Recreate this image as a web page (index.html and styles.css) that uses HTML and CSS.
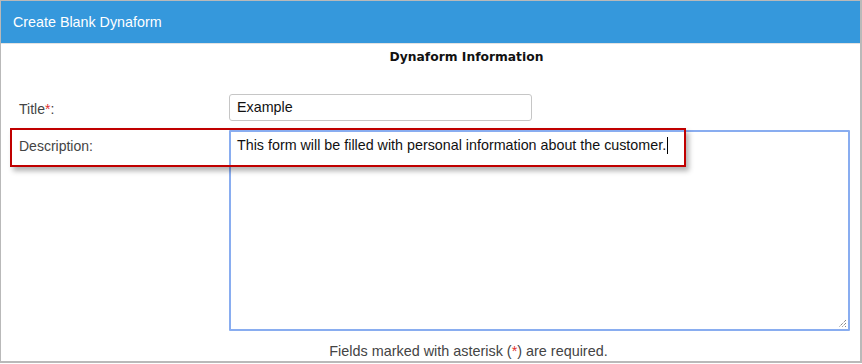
FILE: index.html
```html
<!DOCTYPE html>
<html lang="en">
<head>
  <meta charset="UTF-8" />
  <title>Create Blank Dynaform</title>
  <link rel="stylesheet" href="styles.css">
</head>
<body>

  <div class="panel">
    <!-- ===== Header ===== -->
    <div class="panel-header">Create Blank Dynaform</div>

    <div class="section-title">Dynaform Information</div>

    <!-- ===== Form ===== -->
    <div class="form-grid">
      <label class="field-label">Title<span class="req">*</span>:</label>
      <div class="text-input">Example</div>

      <label class="field-label desc-label">Description:</label>
      <div class="text-area">This form will be filled with personal information about the customer.<span class="caret"></span>
        <svg class="grip" width="9" height="9" viewBox="0 0 9 9">
          <path d="M8 1 L1 8 M8 4 L4 8 M8 7 L7 8" stroke="#555" stroke-width="1" stroke-dasharray="1 1" fill="none"/>
        </svg>
      </div>
    </div>

    <p class="note">Fields marked with asterisk (<span class="req">*</span>) are required.</p>

    <!-- highlight callout -->
    <div class="highlight"></div>
  </div>

</body>
</html>
```

FILE: styles.css
```css
body {
  margin: 0;
  font-family: "Liberation Sans", Arial, sans-serif;
  background: #fff;
  color: #333;
}

/* ===== Panel ===== */
.panel {
  position: relative;
  width: 859px;
  height: 360px;
  border: 1px solid #b9b9b9;
  border-right-width: 2px;
  border-bottom-width: 2px;
}
.panel-header {
  height: 42px;
  line-height: 42px;
  padding-left: 12px;
  background: #3598dc;
  color: #fff;
  font-size: 14.3px;
  border-bottom: 1px solid #e2e2e2;
}
.section-title {
  text-align: center;
  font-family: "DejaVu Sans", Verdana, sans-serif;
  font-size: 12.3px;
  font-weight: bold;
  color: #111;
  padding: 6px 0 0 72px;
  height: 22px;
}

/* ===== Form ===== */
.form-grid {
  display: grid;
  grid-template-columns: 228px 1fr;
  row-gap: 9px;
  margin-top: 22px;
  padding-right: 10px;
}
.field-label {
  padding: 7px 0 0 18px;
  font-size: 14px;
  color: #444;
}
.desc-label { padding-top: 8px; }
.req { color: #e03030; }
.text-input {
  width: 294px;
  height: 25px;
  line-height: 25px;
  padding-left: 7px;
  border: 1px solid #c6c6c6;
  border-radius: 3px;
  font-size: 14.3px;
  color: #111;
}
.text-area {
  position: relative;
  height: 189px;
  padding: 4px 7px 4px 6px;
  border: 2px solid #89adf0;
  border-radius: 1px;
  font-size: 14.3px;
  color: #111;
  line-height: 18px;
}
.caret {
  display: inline-block;
  width: 1px;
  height: 17px;
  margin-left: 1px;
  background: #000;
  vertical-align: -4px;
}
.grip {
  position: absolute;
  right: 1px;
  bottom: 1px;
}
.note {
  margin: 12px 0 0;
  text-align: center;
  font-size: 14.4px;
  color: #444;
  padding-left: 76px;
}

/* ===== Callout ===== */
.highlight {
  position: absolute;
  left: 9px;
  top: 127px;
  width: 672px;
  height: 35px;
  border: 2px solid #c00000;
  box-shadow: 3px 4px 5px rgba(0,0,0,0.3);
}
```
